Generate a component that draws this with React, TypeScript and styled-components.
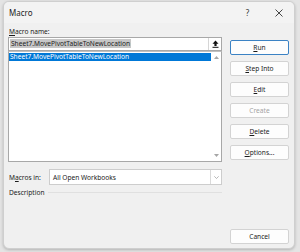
import { createGlobalStyle, styled } from "styled-components";

const GlobalStyle = createGlobalStyle`
  html, body {
    margin: 0;
    padding: 0;
    background: #e4e4e4;
  }
  body {
    font-family: "Noto Sans", "Open Sans", sans-serif;
    font-size: 6.6px;
    color: #1b1b1b;
  }
`;

const Page = styled.div`
  width: 300px;
  height: 252px;
  padding: 1px 0 0 3px;
  box-sizing: border-box;
`;

const Dialog = styled.div`
  width: 292px;
  height: 248px;
  box-sizing: border-box;
  background: #f0f0f0;
  border: 1px solid #cfcfcf;
  border-radius: 6px;
  box-shadow: 0 1px 3px rgba(0, 0, 0, 0.22);
  display: flex;
  flex-direction: column;
  overflow: hidden;
`;

const TitleBar = styled.div`
  height: 21px;
  display: flex;
  align-items: center;
  padding-left: 5px;
  background: #f3f3f3;
  font-size: 8px;
`;

const Title = styled.div`
  flex: 1;
`;

const TitleButton = styled.div`
  width: 31px;
  height: 21px;
  display: flex;
  align-items: center;
  justify-content: center;
  font-size: 8px;
  color: #333;
`;

const Body = styled.div`
  flex: 1;
  display: flex;
  gap: 8px;
  padding: 4px 5px 4px 4px;
`;

const LeftCol = styled.div`
  width: 214px;
  display: flex;
  flex-direction: column;
`;

const Label = styled.div`
  height: 10px;
  line-height: 10px;
  padding-left: 1px;
`;

const Key = styled.span`
  text-decoration: underline;
  text-underline-offset: 1px;
`;

const NameInput = styled.div`
  height: 14px;
  margin-top: 0;
  box-sizing: border-box;
  background: #fff;
  border: 1px solid #a8a8a8;
  display: flex;
  align-items: center;
  padding-left: 1px;
`;

const Selected = styled.span`
  flex: 1;
  line-height: 10px;
  span {
    background: #c7c7c7;
    color: #222;
    padding: 0 1px;
  }
`;

const UpButton = styled.div`
  width: 12px;
  height: 12px;
  display: flex;
  align-items: center;
  justify-content: center;
  border-left: 1px solid #d6d6d6;
`;

const ListBox = styled.div`
  height: 111px;
  box-sizing: border-box;
  background: #fff;
  border: 1px solid #a8a8a8;
  border-top-color: #c0c0c0;
  display: flex;
`;

const ListItems = styled.div`
  flex: 1;
  padding: 1px 0 0 0;
`;

const ListRow = styled.div<{ $active?: boolean }>`
  height: 8px;
  line-height: 8px;
  padding-left: 1px;
  background: ${({ $active }) => ($active ? "#0078d7" : "transparent")};
  color: ${({ $active }) => ($active ? "#fff" : "#1b1b1b")};
`;

const ScrollBar = styled.div`
  width: 10px;
  display: flex;
  flex-direction: column;
  justify-content: space-between;
  align-items: center;
  padding: 4px 0;
`;

const SelectRow = styled.div`
  margin-top: 7px;
  height: 16px;
  display: flex;
  align-items: center;
`;

const SelectLabel = styled.div`
  width: 40px;
  padding-left: 1px;
`;

const Select = styled.div`
  flex: 1;
  height: 16px;
  box-sizing: border-box;
  background: #fff;
  border: 1px solid #cdcdcd;
  display: flex;
  align-items: center;
  padding-left: 3px;
`;

const SelectText = styled.div`
  flex: 1;
`;

const Chevron = styled.div`
  width: 10px;
  height: 14px;
  border-left: 1px solid #dadada;
  display: flex;
  align-items: center;
  justify-content: center;
`;

const DescRow = styled.div`
  margin-top: 2px;
  height: 11px;
  display: flex;
  align-items: center;
  gap: 4px;
  padding-left: 1px;
`;

const Rule = styled.div`
  flex: 1;
  height: 1px;
  background: #e0e0e0;
`;

const ButtonCol = styled.div`
  width: 59px;
  display: flex;
  flex-direction: column;
  gap: 6px;
  padding-top: 13px;
`;

const Button = styled.div<{ $primary?: boolean; $disabled?: boolean; $bottom?: boolean }>`
  height: 15px;
  box-sizing: border-box;
  background: #fdfdfd;
  border: 1px solid ${({ $primary }) => ($primary ? "#3b82c4" : "#d3d3d3")};
  border-radius: 2px;
  display: flex;
  align-items: center;
  justify-content: center;
  color: ${({ $disabled }) => ($disabled ? "#a3a3a3" : "#1b1b1b")};
  margin-top: ${({ $bottom }) => ($bottom ? "auto" : "0")};
`;

const buttons = [
  { key: "R", rest: "un", primary: true },
  { key: "S", rest: "tep Into" },
  { key: "E", rest: "dit" },
  { key: "", rest: "Create", disabled: true },
  { key: "D", rest: "elete" },
  { key: "O", rest: "ptions..." },
];

export default function App() {
  return (
    <>
      <GlobalStyle />
      <Page>
        <Dialog>
          <TitleBar>
            <Title>Macro</Title>
            <TitleButton>?</TitleButton>
            <TitleButton>
              <svg width="8" height="8" viewBox="0 0 8 8">
                <path d="M0.5 0.5 L7.5 7.5 M7.5 0.5 L0.5 7.5" stroke="#333" strokeWidth="0.9" />
              </svg>
            </TitleButton>
          </TitleBar>
          <Body>
            <LeftCol>
              <Label>
                <Key>M</Key>acro name:
              </Label>
              <NameInput>
                <Selected>
                  <span>Sheet7.MovePivotTableToNewLocation</span>
                </Selected>
                <UpButton>
                  <svg width="7" height="8" viewBox="0 0 7 8">
                    <path d="M3.5 0.5 L6.5 3.8 L4.6 3.8 L4.6 6 L2.4 6 L2.4 3.8 L0.5 3.8 Z" fill="#111" />
                    <rect x="0.5" y="6.8" width="6" height="1" fill="#111" />
                  </svg>
                </UpButton>
              </NameInput>
              <ListBox>
                <ListItems>
                  <ListRow $active>Sheet7.MovePivotTableToNewLocation</ListRow>
                </ListItems>
                <ScrollBar>
                  <svg width="5" height="3" viewBox="0 0 5 3">
                    <path d="M2.5 0 L5 3 L0 3 Z" fill="#a6a6a6" />
                  </svg>
                  <svg width="5" height="3" viewBox="0 0 5 3">
                    <path d="M0 0 L5 0 L2.5 3 Z" fill="#a6a6a6" />
                  </svg>
                </ScrollBar>
              </ListBox>
              <SelectRow>
                <SelectLabel>
                  M<Key>a</Key>cros in:
                </SelectLabel>
                <Select>
                  <SelectText>All Open Workbooks</SelectText>
                  <Chevron>
                    <svg width="5" height="3" viewBox="0 0 5 3">
                      <path d="M0.3 0.3 L2.5 2.5 L4.7 0.3" stroke="#8a8a8a" strokeWidth="0.6" fill="none" />
                    </svg>
                  </Chevron>
                </Select>
              </SelectRow>
              <DescRow>
                Description
                <Rule />
              </DescRow>
            </LeftCol>
            <ButtonCol>
              {buttons.map((b) => (
                <Button key={b.rest} $primary={b.primary} $disabled={b.disabled}>
                  {b.key && <Key>{b.key}</Key>}
                  {b.rest}
                </Button>
              ))}
              <Button $bottom>Cancel</Button>
            </ButtonCol>
          </Body>
        </Dialog>
      </Page>
    </>
  );
}
